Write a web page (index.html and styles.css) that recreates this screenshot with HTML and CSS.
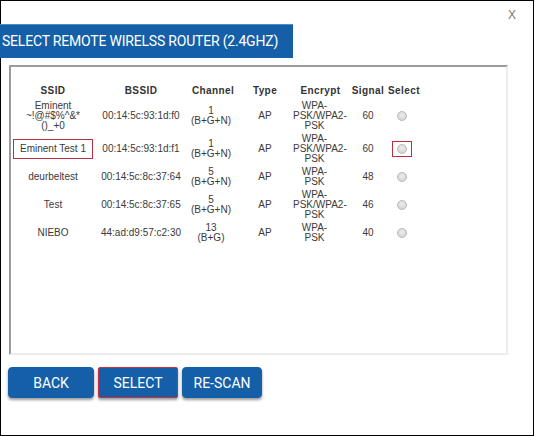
FILE: index.html
```html
<!DOCTYPE html>
<html>
<head>
<meta charset="utf-8">
<link rel="stylesheet" href="styles.css">
</head>
<body>
<div class="dialog">
  <span class="close">X</span>
  <div class="title">SELECT REMOTE WIRELSS ROUTER (2.4GHZ)</div>
  <div class="box">
    <table class="list">
      <colgroup>
        <col class="c-ssid"><col class="c-bssid"><col class="c-chan"><col class="c-type"><col class="c-enc"><col class="c-sig"><col class="c-sel">
      </colgroup>
      <thead>
        <tr><th>SSID</th><th>BSSID</th><th>Channel</th><th>Type</th><th>Encrypt</th><th>Signal</th><th>Select</th></tr>
      </thead>
      <tbody>
        <tr>
          <td>Eminent<br>~!@#$%^&amp;*<br>()_+0</td>
          <td>00:14:5c:93:1d:f0</td>
          <td class="chan">1<br>(B+G+N)</td>
          <td>AP</td>
          <td class="enc">WPA-<br>PSK/WPA2-<br>PSK</td>
          <td>60</td>
          <td><span class="radio"></span></td>
        </tr>
        <tr>
          <td><span class="mark">Eminent Test 1</span></td>
          <td>00:14:5c:93:1d:f1</td>
          <td class="chan">1<br>(B+G+N)</td>
          <td>AP</td>
          <td class="enc">WPA-<br>PSK/WPA2-<br>PSK</td>
          <td>60</td>
          <td><span class="mark mark-radio"><span class="radio"></span></span></td>
        </tr>
        <tr>
          <td>deurbeltest</td>
          <td>00:14:5c:8c:37:64</td>
          <td class="chan">5<br>(B+G+N)</td>
          <td>AP</td>
          <td class="enc">WPA-<br>PSK</td>
          <td>48</td>
          <td><span class="radio"></span></td>
        </tr>
        <tr>
          <td>Test</td>
          <td>00:14:5c:8c:37:65</td>
          <td class="chan">5<br>(B+G+N)</td>
          <td>AP</td>
          <td class="enc">WPA-<br>PSK/WPA2-<br>PSK</td>
          <td>46</td>
          <td><span class="radio"></span></td>
        </tr>
        <tr>
          <td>NIEBO</td>
          <td>44:ad:d9:57:c2:30</td>
          <td class="chan">13<br>(B+G)</td>
          <td>AP</td>
          <td class="enc">WPA-<br>PSK</td>
          <td>40</td>
          <td><span class="radio"></span></td>
        </tr>
      </tbody>
    </table>
  </div>
  <div class="actions">
    <button class="btn btn-back">BACK</button>
    <button class="btn btn-select">SELECT</button>
    <button class="btn btn-rescan">RE-SCAN</button>
  </div>
</div>
</body>
</html>
```
FILE: styles.css
```css
html, body {
  margin: 0;
  padding: 0;
  background: #fff;
}

.dialog {
  position: relative;
  width: 534px;
  height: 436px;
  box-sizing: border-box;
  border: 1px solid #000;
  padding-top: 23px;
  background: #fff;
  font-family: "Liberation Sans", Arial, sans-serif;
}

.close {
  position: absolute;
  top: 7px;
  right: 17px;
  font-size: 12px;
  color: #777;
  font-family: "Liberation Sans", Arial, sans-serif;
}

.title {
  margin-left: -1px;
  width: 293px;
  height: 34px;
  box-sizing: border-box;
  background: #155fa9;
  border-top: 1px solid #4a8fd2;
  color: #fff;
  font-family: Roboto, "Liberation Sans", sans-serif;
  font-size: 14px;
  letter-spacing: -0.2px;
  line-height: 32px;
  padding-left: 2px;
  white-space: nowrap;
}

.box {
  margin: 7px 0 0 8px;
  width: 499px;
  height: 290px;
  box-sizing: border-box;
  border: 2px solid;
  border-color: #9b9b9b #ececec #ececec #9b9b9b;
  padding-top: 15px;
}

.list {
  border-collapse: separate;
  border-spacing: 2px;
  table-layout: fixed;
  width: 407px;
  color: #3a3a3a;
  font-size: 10px;
  line-height: 10px;
}

.c-ssid { width: 80px; }
.c-bssid { width: 92px; }
.c-chan { width: 48px; }
.c-type { width: 52px; }
.c-enc { width: 55px; }
.c-sig { width: 36px; }
.c-sel { width: 28px; }

.list th {
  font-weight: bold;
  font-size: 10px;
  letter-spacing: 0.4px;
  color: #333;
  height: 14px;
  padding: 0;
  text-align: center;
  vertical-align: middle;
  white-space: nowrap;
}

.list td {
  padding: 0.5px 0;
  text-align: center;
  vertical-align: middle;
  white-space: nowrap;
}

.list td.chan {
  padding-right: 4px;
}

.list td.enc {
  padding-right: 12px;
}

.radio {
  display: inline-block;
  width: 8px;
  height: 8px;
  border-radius: 50%;
  border: 1px solid #b9b9b9;
  background: radial-gradient(circle at 50% 40%, #eeeeee 0%, #d6d6d6 70%, #cccccc 100%);
  vertical-align: middle;
}

.mark {
  display: inline-block;
  border: 1px solid #b8323e;
  padding: 4px 6px;
  line-height: 10px;
}

.mark-radio {
  padding: 2px 4px;
  line-height: 0;
}

.actions {
  display: flex;
  gap: 4px;
  margin: 12px 0 0 7px;
}

.btn {
  height: 31px;
  box-sizing: border-box;
  border: 1px solid #155fa9;
  border-radius: 4px;
  background: #155fa9;
  color: #fff;
  font-family: Roboto, "Liberation Sans", sans-serif;
  font-size: 14px;
  padding: 0;
  box-shadow: 0 2px 3px rgba(0, 0, 0, 0.4);
}

.btn-back { width: 86px; }
.btn-select { width: 80px; border-color: #c8323e; border-radius: 2px; }
.btn-rescan { width: 80px; }
```
